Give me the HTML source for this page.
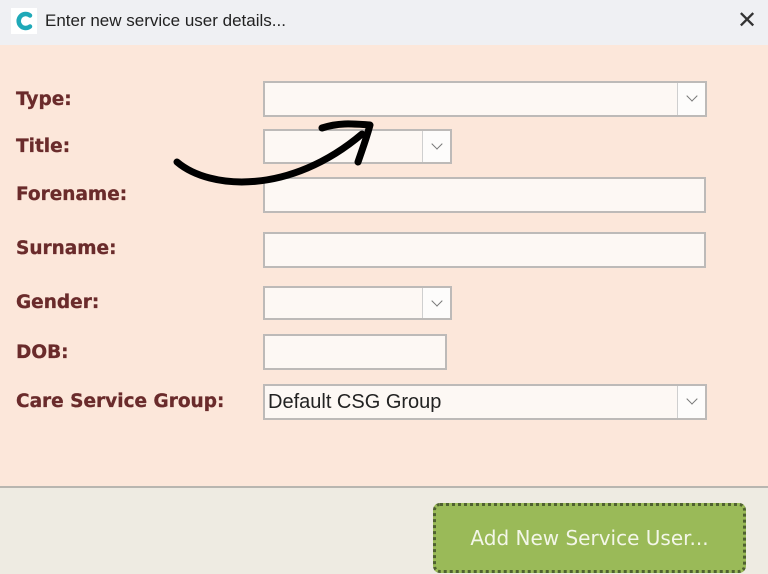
<!DOCTYPE html>
<html><head><meta charset="utf-8"><style>
*{margin:0;padding:0;box-sizing:border-box}
body{width:768px;height:574px;overflow:hidden;background:#fce7da;font-family:"DejaVu Sans","Liberation Sans",sans-serif;position:relative}
.tb{position:absolute;left:0;top:0;width:768px;height:45px;background:#eff0f3}
.tb .t{position:absolute;left:45px;top:11px;color:#222;font-family:"Liberation Sans",sans-serif;font-size:17px}
.x{position:absolute;left:737px;top:6px;font-size:24px;color:#333;font-family:"DejaVu Sans",sans-serif}
.lbl{position:absolute;left:16px;font-weight:bold;color:#6a2b2b;font-size:18.5px;-webkit-text-stroke:0.3px #6a2b2b}
.f{position:absolute;left:263px;height:36px;background:#fdf8f4;border:2px solid #bdbab8}
.dd::after{content:"";position:absolute;right:0;top:0;width:27px;height:100%;border-left:1px solid #cfcfcf;background:#fdfcfb}
.chev{position:absolute;right:9px;top:9px;width:8px;height:8px;border-right:1px solid #777;border-bottom:1px solid #777;transform:rotate(45deg);z-index:2}
.bot{position:absolute;left:0;top:486px;width:768px;height:88px;background:#eeebe2;border-top:2px solid #b8b6b0}
.btn{position:absolute;left:433px;top:503px;width:313px;height:70px;background:#9aba58;border:3px dotted #4f6130;border-radius:7px;color:#f3f6e8;font-size:20px;text-align:center;line-height:64px}
</style></head><body>
<div class="tb">
<svg style="position:absolute;left:11px;top:8px" width="26" height="26" viewBox="0 0 26 26"><rect width="26" height="26" fill="#fff"/><path d="M19 7.5A7 7 0 1 0 19 18.5" fill="none" stroke="#1fa9b8" stroke-width="4.5" stroke-linecap="round"/></svg>
<div class="t">Enter new service user details...</div>
<div class="x">✕</div>
</div>
<div class="lbl" style="top:89px">Type:</div>
<div class="lbl" style="top:136px">Title:</div>
<div class="lbl" style="top:184px">Forename:</div>
<div class="lbl" style="top:238px">Surname:</div>
<div class="lbl" style="top:292px">Gender:</div>
<div class="lbl" style="top:342px">DOB:</div>
<div class="lbl" style="top:391px">Care Service Group:</div>
<div class="f dd" style="top:81px;width:444px"><div class="chev"></div></div>
<div class="f dd" style="top:129px;width:189px;height:35px"><div class="chev"></div></div>
<div class="f" style="top:177px;width:443px"></div>
<div class="f" style="top:232px;width:443px"></div>
<div class="f dd" style="top:286px;width:189px;height:34px"><div class="chev"></div></div>
<div class="f" style="top:334px;width:184px"></div>
<div class="f dd" style="top:384px;width:444px"><div style="position:absolute;left:3px;top:5px;font-size:20px;color:#222;font-family:'Liberation Sans',sans-serif">Default CSG Group</div><div class="chev"></div></div>
<svg style="position:absolute;left:0;top:0" width="768" height="574"><path d="M177 162 C210 190 290 195 362 134" fill="none" stroke="#000" stroke-width="7" stroke-linecap="round"/><path d="M322 128 C340 122 355 124 370 125 C366 140 362 150 358 162" fill="none" stroke="#000" stroke-width="7" stroke-linecap="round" stroke-linejoin="round"/></svg>
<div class="bot"></div>
<div class="btn">Add New Service User...</div>
</body></html>
